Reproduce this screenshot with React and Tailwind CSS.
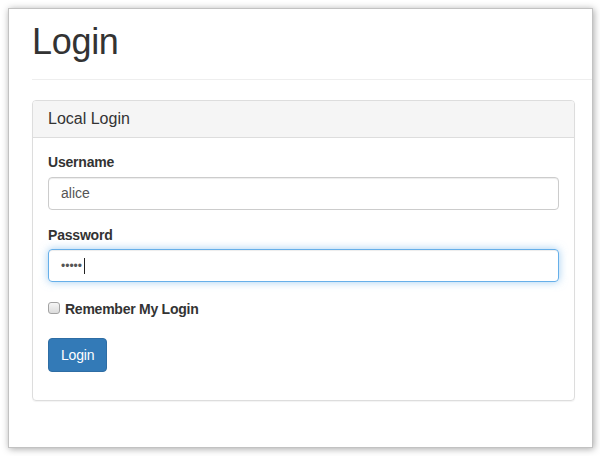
export default function App() {
  return (
    <div className="w-[600px] h-[456px] bg-white pt-[8px] pl-[8px] font-['Liberation_Sans',Arial,sans-serif] text-[#333]">
      <div className="w-[585px] h-[440px] border border-[#c2c2c2] bg-white shadow-[1px_1px_7px_rgba(0,0,0,0.35)] pl-[23px] pt-[13px] overflow-hidden">
        <div className="border-b border-[#eee] pb-[17px]">
          <h1 className="text-[36px] leading-[40px] font-normal text-[#333] tracking-[-0.3px]">Login</h1>
        </div>
        <div className="mt-[20px] w-[543px] border border-[#ddd] rounded-[4px] shadow-[0_1px_1px_rgba(0,0,0,0.05)]">
          <div className="h-[37px] flex items-center px-[15px] bg-[#f5f5f5] border-b border-[#ddd] rounded-t-[3px] text-[16px] text-[#333]">
            Local Login
          </div>
          <div className="px-[15px] pt-[14px] pb-[28px]">
            <label className="block text-[14px] leading-[20px] font-bold tracking-[-0.2px] mb-[5px]">Username</label>
            <div className="h-[33px] border border-[#ccc] rounded-[4px] shadow-[inset_0_1px_1px_rgba(0,0,0,0.075)] px-[12px] flex items-center text-[14px] text-[#555]">
              alice
            </div>
            <label className="block text-[14px] leading-[20px] font-bold tracking-[-0.2px] mt-[15px] mb-[4px]">Password</label>
            <div className="h-[33px] border border-[#66afe9] rounded-[4px] shadow-[inset_0_1px_1px_rgba(0,0,0,0.075),0_0_8px_rgba(102,175,233,0.6)] px-[12px] flex items-center text-[#555]">
              <span className="text-[12px] leading-[16px]">•••••</span>
              <span className="ml-[2px] w-[1px] h-[16px] bg-[#222]"></span>
            </div>
            <div className="mt-[17px] flex items-start h-[20px]">
              <span className="mt-[3px] w-[12px] h-[12px] border border-[#a3a3a3] rounded-[3px] bg-gradient-to-b from-[#f6f6f6] to-[#dcdcdc]"></span>
              <span className="ml-[5px] text-[14px] leading-[20px] font-bold tracking-[-0.25px]">Remember My Login</span>
            </div>
            <button className="mt-[19px] h-[34px] px-[12px] bg-[#337ab7] border border-[#2e6da4] rounded-[4px] text-white text-[14px] leading-[20px] tracking-[-0.2px]">
              Login
            </button>
          </div>
        </div>
      </div>
    </div>
  );
}
